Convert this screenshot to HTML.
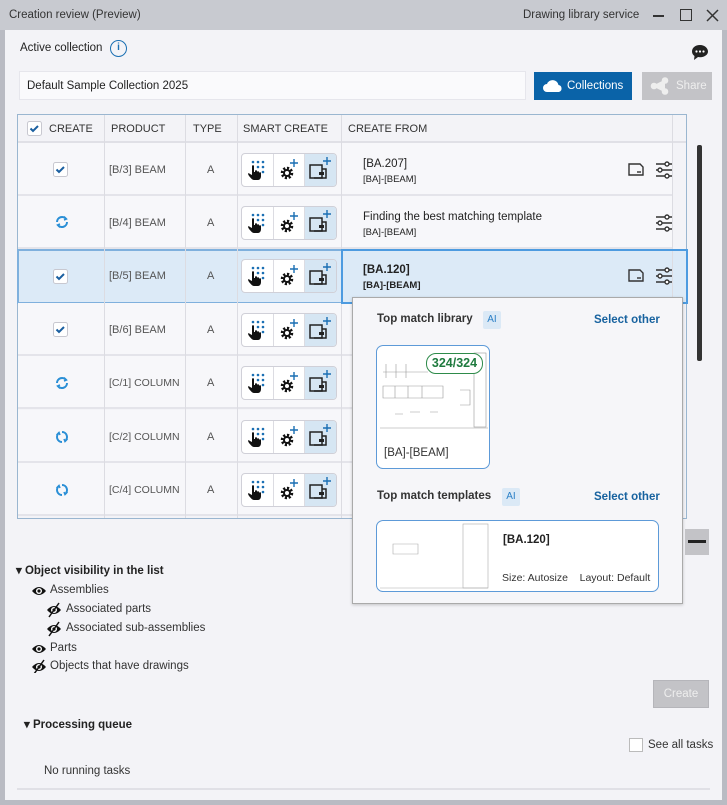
<!DOCTYPE html>
<html><head><meta charset="utf-8"><style>
*{box-sizing:border-box;margin:0;padding:0}
body{width:727px;height:805px;background:#b9bbc3;font-family:"Liberation Sans",sans-serif;font-size:12px;color:#222;position:relative;overflow:hidden}
.a{position:absolute}
.title{left:0;top:0;width:727px;height:30px;background:#c8cad0}
.main{left:5px;top:30px;width:717px;height:770px;background:#f3f3f7}
.th{top:115px;height:29px;line-height:29px;font-size:11px;color:#333}
.row{left:18px;width:654px;height:53px;background:#f7f7fa;border-bottom:2px solid #e4e4ea}
.vl{width:1px;background:#dcdce2}
.cb{width:14px;height:14px;border:1px solid #c8c8d0;background:#fff;border-radius:2px}
.sc{width:96px;height:34px;border:1px solid #d0d0d8;border-radius:4px;background:#fff;display:flex;overflow:hidden}
.sc div{flex:1;border-right:1px solid #dcdce2;position:relative}
.sc div:last-child{background:#d6e6f3;border:none}
.t{font-size:11px;color:#555}
.ey{font-size:11.5px;color:#333}
</style></head><body>
<div class="a title"></div>
<div class="a" style="left:9px;top:9px;font-size:11.5px;color:#333">Creation review (Preview)</div>
<div class="a" style="left:523px;top:9px;font-size:11.5px;color:#333">Drawing library service</div>
<div class="a" style="left:653px;top:15px;width:11px;height:1.5px;background:#333"></div>
<div class="a" style="left:680px;top:9px;width:12px;height:12px;border:1.5px solid #333"></div>
<svg class="a" style="left:706px;top:9px" width="13" height="13"><path d="M1 1L12 12M12 1L1 12" stroke="#333" stroke-width="1.5"/></svg>
<div class="a main"></div>
<div class="a" style="left:20px;top:42px;font-size:11.5px;color:#222">Active collection</div>
<div class="a" style="left:110px;top:40px;width:17px;height:17px;border:1.5px solid #1a6fb3;border-radius:50%;color:#1a6fb3;font-size:10px;text-align:center;line-height:14px;font-weight:bold">i</div>
<svg class="a" style="left:691px;top:44px" width="18" height="18"><path d="M9 1C4 1 1 4 1 7.5c0 2 1 3.5 2.5 4.5L3 16l4-3c.6.1 1.3.2 2 .2 5 0 8-2.8 8-5.7S14 1 9 1z" fill="#222"/><circle cx="5.5" cy="7.5" r="1.1" fill="#fff"/><circle cx="9" cy="7.5" r="1.1" fill="#fff"/><circle cx="12.5" cy="7.5" r="1.1" fill="#fff"/></svg>
<div class="a" style="left:19px;top:71px;width:507px;height:29px;background:#fafafc;border:1px solid #e6e6ec;padding:8px 7px;font-size:11.5px">Default Sample Collection 2025</div>
<div class="a" style="left:534px;top:72px;width:98px;height:28px;background:#0a63a8;color:#fff;font-size:11.5px;line-height:28px;padding-left:33px">Collections</div>
<svg class="a" style="left:542px;top:77px" width="22" height="17"><path d="M5 15a4 4 0 0 1 0-8 6 6 0 0 1 11.5 1A3.6 3.6 0 0 1 17 15z" fill="#fff"/></svg>
<div class="a" style="left:642px;top:72px;width:70px;height:28px;background:#c3c3c7;color:#eee;font-size:11.5px;line-height:28px;padding-left:34px">Share</div>
<svg class="a" style="left:650px;top:77px" width="20" height="18"><g fill="#eee" stroke="#eee" stroke-width="1.6"><circle cx="15" cy="3.5" r="2.5"/><circle cx="4" cy="9" r="2.5"/><circle cx="15" cy="14.5" r="2.5"/><path d="M15 3.5L4 9l11 5.5"/></g></svg>
<!-- table -->
<div class="a" style="left:17px;top:114px;width:670px;height:405px;border:1px solid #9ab6d0;background:#f3f3f7"></div>
<div class="a" style="left:18px;top:115px;width:668px;height:28px;background:#f3f3f7;border-bottom:2px solid #e0e0e6"></div>
<div class="a th" style="left:49px">CREATE</div>
<div class="a th" style="left:111px">PRODUCT</div>
<div class="a th" style="left:193px">TYPE</div>
<div class="a th" style="left:243px">SMART CREATE</div>
<div class="a th" style="left:348px">CREATE FROM</div>
<div class="a" style="left:697px;top:145px;width:5px;height:216px;background:#333;border-radius:2px"></div>

<div class="a row" style="top:143px"></div>
<div class="a row" style="top:196px"></div>
<div class="a row" style="top:249px;background:#dceaf7;border:2px solid #7fb0dd;left:17px;width:671px;height:55px"></div>
<div class="a row" style="top:303px"></div>
<div class="a row" style="top:356px"></div>
<div class="a row" style="top:410px"></div>
<div class="a row" style="top:463px"></div>
<div class="a vl" style="left:104px;top:115px;height:403px"></div>
<div class="a vl" style="left:185px;top:115px;height:403px"></div>
<div class="a vl" style="left:237px;top:115px;height:403px"></div>
<div class="a vl" style="left:341px;top:115px;height:403px"></div>
<div class="a vl" style="left:672px;top:115px;height:403px"></div>

<svg class="a" style="left:0;top:0" width="120" height="520">
<defs>
<g id="ck"><rect x="0.5" y="0.5" width="14" height="14" rx="2" fill="#fff" stroke="#c8c8d0"/><path d="M3.5 7.5l2.5 2.5 5-5" fill="none" stroke="#1a5fa0" stroke-width="2"/></g>
<g id="sy" fill="none" stroke="#2a8fd6" stroke-width="2"><path d="M2 7a5 5 0 0 1 9-3"/><path d="M12 7a5 5 0 0 1-9 3"/><path d="M9 1.5l2.5 2.5-2.5 1" stroke-width="1.5"/><path d="M5 12.5l-2.5-2.5 2.5-1" stroke-width="1.5"/></g>
</defs>
<use href="#ck" x="27" y="121"/>
<use href="#ck" x="53" y="162"/>
<use href="#sy" x="55" y="215"/>
<use href="#ck" x="53" y="269"/>
<use href="#ck" x="53" y="322"/>
<use href="#sy" x="55" y="376"/>
<use href="#sy" x="55" y="430" transform="rotate(90 62 437)"/>
<use href="#sy" x="55" y="483" transform="rotate(90 62 490)"/>
</svg>

<div class="a t" style="left:109px;top:164px">[B/3] BEAM</div><div class="a t" style="left:207px;top:164px">A</div>
<div class="a t" style="left:109px;top:217px">[B/4] BEAM</div><div class="a t" style="left:207px;top:217px">A</div>
<div class="a t" style="left:109px;top:270px">[B/5] BEAM</div><div class="a t" style="left:207px;top:270px">A</div>
<div class="a t" style="left:109px;top:324px">[B/6] BEAM</div><div class="a t" style="left:207px;top:324px">A</div>
<div class="a t" style="left:109px;top:377px;font-size:10.5px">[C/1] COLUMN</div><div class="a t" style="left:207px;top:377px">A</div>
<div class="a t" style="left:109px;top:431px;font-size:10.5px">[C/2] COLUMN</div><div class="a t" style="left:207px;top:431px">A</div>
<div class="a t" style="left:109px;top:484px;font-size:10.5px">[C/4] COLUMN</div><div class="a t" style="left:207px;top:484px">A</div>

<div class="a sc" style="left:241px;top:153px"><div></div><div></div><div></div></div>
<div class="a sc" style="left:241px;top:206px"><div></div><div></div><div></div></div>
<div class="a sc" style="left:241px;top:259px"><div></div><div></div><div></div></div>
<div class="a sc" style="left:241px;top:313px"><div></div><div></div><div></div></div>
<div class="a sc" style="left:241px;top:366px"><div></div><div></div><div></div></div>
<div class="a sc" style="left:241px;top:420px"><div></div><div></div><div></div></div>
<div class="a sc" style="left:241px;top:473px"><div></div><div></div><div></div></div>
<svg class="a" style="left:241px;top:153px" width="96" height="360">
<defs><g id="ic">
<circle cx="12" cy="9" r="1.3" fill="#1a6fb3"/><circle cx="17" cy="9" r="1.3" fill="#1a6fb3"/><circle cx="22" cy="9" r="1.3" fill="#1a6fb3"/><circle cx="22" cy="14" r="1.3" fill="#1a6fb3"/><circle cx="22" cy="19" r="1.3" fill="#1a6fb3"/><circle cx="17" cy="14" r="1.3" fill="#1a6fb3"/>
<path d="M11 13c0-1 2-1 2 0v6h1v-1c0-1 2-1 2 0v1c0-1 2-1 2 0v1c0-1 2-1 2 0v3c0 2-1 4-3 4h-4c-2 0-3-2-5-4l-1-2c0-1 1-1 2 0l2 1z" fill="#111"/>
<circle cx="46" cy="20" r="4.5" fill="none" stroke="#111" stroke-width="3.5" stroke-dasharray="2 1.5"/><circle cx="46" cy="20" r="3" fill="none" stroke="#111" stroke-width="2"/>
<path d="M53 6v8M49 10h8" stroke="#1a6fb3" stroke-width="1.4"/>
<path d="M69 12h12v13H69z" fill="none" stroke="#222" stroke-width="1.5"/><path d="M81 16h4v9h-12" fill="none" stroke="#222" stroke-width="1.5"/><rect x="78" y="19" width="5" height="3" fill="#222"/>
<path d="M86 4v8M82 8h8" stroke="#1a6fb3" stroke-width="1.4"/>
</g></defs>
<use href="#ic" y="0"/><use href="#ic" y="53"/><use href="#ic" y="106"/><use href="#ic" y="160"/><use href="#ic" y="213"/><use href="#ic" y="267"/><use href="#ic" y="320"/>
</svg>

<div class="a" style="left:363px;top:158px;font-size:11.5px">[BA.207]</div>
<div class="a" style="left:363px;top:174px;font-size:9.5px">[BA]-[BEAM]</div>
<div class="a" style="left:363px;top:211px;font-size:11.5px">Finding the best matching template</div>
<div class="a" style="left:363px;top:227px;font-size:9.5px">[BA]-[BEAM]</div>
<div class="a" style="left:341px;top:249px;width:347px;height:55px;border:2px solid #4d9be0"></div>
<div class="a" style="left:363px;top:264px;font-size:11.5px;font-weight:bold">[BA.120]</div>
<div class="a" style="left:363px;top:280px;font-size:9.5px;font-weight:bold">[BA]-[BEAM]</div>
<svg class="a" style="left:626px;top:160px" width="50" height="130">
<g id="r" fill="none" stroke="#333" stroke-width="1.4"><path d="M3 4h11l3 3v8H3z"/><path d="M11 12h4"/><path d="M30 4h16M30 10h16M30 16h16"/><circle cx="41" cy="4" r="2" fill="#fff"/><circle cx="34" cy="10" r="2" fill="#fff"/><circle cx="41" cy="16" r="2" fill="#fff"/></g>
<use href="#r" y="106"/>
<g fill="none" stroke="#333" stroke-width="1.4" transform="translate(0,53)"><path d="M30 4h16M30 10h16M30 16h16"/><circle cx="41" cy="4" r="2" fill="#fff"/><circle cx="34" cy="10" r="2" fill="#fff"/><circle cx="41" cy="16" r="2" fill="#fff"/></g>
</svg>

<!-- popup -->
<div class="a" style="left:352px;top:297px;width:331px;height:307px;background:#f6f6f9;border:1px solid #aaa;box-shadow:0 1px 3px rgba(0,0,0,.2)"></div>
<div class="a" style="left:377px;top:313px;font-size:11.5px;font-weight:bold;color:#333">Top match library</div>
<div class="a" style="left:483px;top:311px;width:18px;height:18px;background:#dbe9f6;color:#2a7fc6;font-size:10px;text-align:center;line-height:18px;border-radius:2px">AI</div>
<div class="a" style="left:594px;top:314px;font-size:11.5px;font-weight:bold;color:#17629f">Select other</div>
<div class="a" style="left:376px;top:345px;width:114px;height:124px;background:#fff;border:1.5px solid #5d9ad8;border-radius:7px"></div>
<svg class="a" style="left:380px;top:350px" width="108" height="82"><g stroke="#999" stroke-width=".6" fill="none"><path d="M3 22h45M6 14v14M16 14v14M26 14v14M3 36h60v12H3zM15 36v12M28 36v12M42 36v12M80 40h10v15h-10M30 62h10M50 62h8M15 64h8"/><rect x="94" y="3" width="12" height="74"/><path d="M0 78h108"/></g></svg>
<div class="a" style="left:426px;top:353px;width:57px;height:21px;border:1.5px solid #2e8b4a;border-radius:10px;background:#fff;color:#1e7a3e;font-weight:bold;font-size:12.5px;text-align:center;line-height:18px">324/324</div>
<div class="a" style="left:384px;top:447px;font-size:11.5px;color:#333">[BA]-[BEAM]</div>
<div class="a" style="left:377px;top:490px;font-size:11.5px;font-weight:bold;color:#333">Top match templates</div>
<div class="a" style="left:502px;top:488px;width:18px;height:18px;background:#dbe9f6;color:#2a7fc6;font-size:10px;text-align:center;line-height:18px;border-radius:2px">AI</div>
<div class="a" style="left:594px;top:491px;font-size:11.5px;font-weight:bold;color:#17629f">Select other</div>
<div class="a" style="left:376px;top:520px;width:283px;height:72px;background:#fff;border:1.5px solid #5d9ad8;border-radius:7px"></div>
<svg class="a" style="left:378px;top:522px" width="112" height="68"><g stroke="#aaa" stroke-width=".6" fill="none"><rect x="85" y="2" width="25" height="64"/><path d="M15 22h25v10H15zM2 66h108"/></g></svg>
<div class="a" style="left:503px;top:534px;font-size:11.5px;font-weight:bold">[BA.120]</div>
<div class="a" style="left:502px;top:572px;font-size:10.5px;color:#333">Size: Autosize&nbsp;&nbsp;&nbsp; Layout: Default</div>
<div class="a" style="left:685px;top:529px;width:24px;height:26px;background:#c3c3c7"></div>
<div class="a" style="left:688px;top:540px;width:18px;height:3px;background:#222"></div>

<!-- bottom -->
<div class="a" style="left:16px;top:563px;font-size:11.5px;font-weight:bold">▾ Object visibility in the list</div>
<svg class="a" style="left:30px;top:583px" width="40" height="90">
<defs>
<g id="eo"><path d="M1 7Q8 -1 15 7Q8 15 1 7z" fill="#111"/><circle cx="8" cy="7" r="3" fill="#fff"/><circle cx="8" cy="7" r="1.6" fill="#111"/></g>
<g id="ec"><use href="#eo"/><path d="M3 14L13 0" stroke="#111" stroke-width="1.5"/></g>
</defs>
<use href="#eo" x="1" y="1"/>
<use href="#ec" x="16" y="20"/>
<use href="#ec" x="16" y="39"/>
<use href="#eo" x="1" y="59"/>
<use href="#ec" x="1" y="77"/>
</svg>
<div class="a ey" style="left:50px;top:584px">Assemblies</div>
<div class="a ey" style="left:66px;top:603px">Associated parts</div>
<div class="a ey" style="left:66px;top:622px">Associated sub-assemblies</div>
<div class="a ey" style="left:50px;top:642px">Parts</div>
<div class="a ey" style="left:50px;top:660px">Objects that have drawings</div>
<div class="a" style="left:653px;top:680px;width:56px;height:28px;background:#c3c3c7;border:1px solid #b5b5ba;color:#eee;font-size:11.5px;line-height:26px;text-align:center">Create</div>
<div class="a" style="left:24px;top:717px;font-size:11.5px;font-weight:bold">▾ Processing queue</div>
<div class="a" style="left:629px;top:738px;width:14px;height:14px;border:1px solid #bbb;background:#fff"></div>
<div class="a" style="left:648px;top:739px;font-size:11.5px;color:#333">See all tasks</div>
<div class="a" style="left:44px;top:765px;font-size:11.5px;color:#333">No running tasks</div>
<div class="a" style="left:17px;top:788px;width:693px;height:2px;background:#e0e0e6"></div>
</body></html>
